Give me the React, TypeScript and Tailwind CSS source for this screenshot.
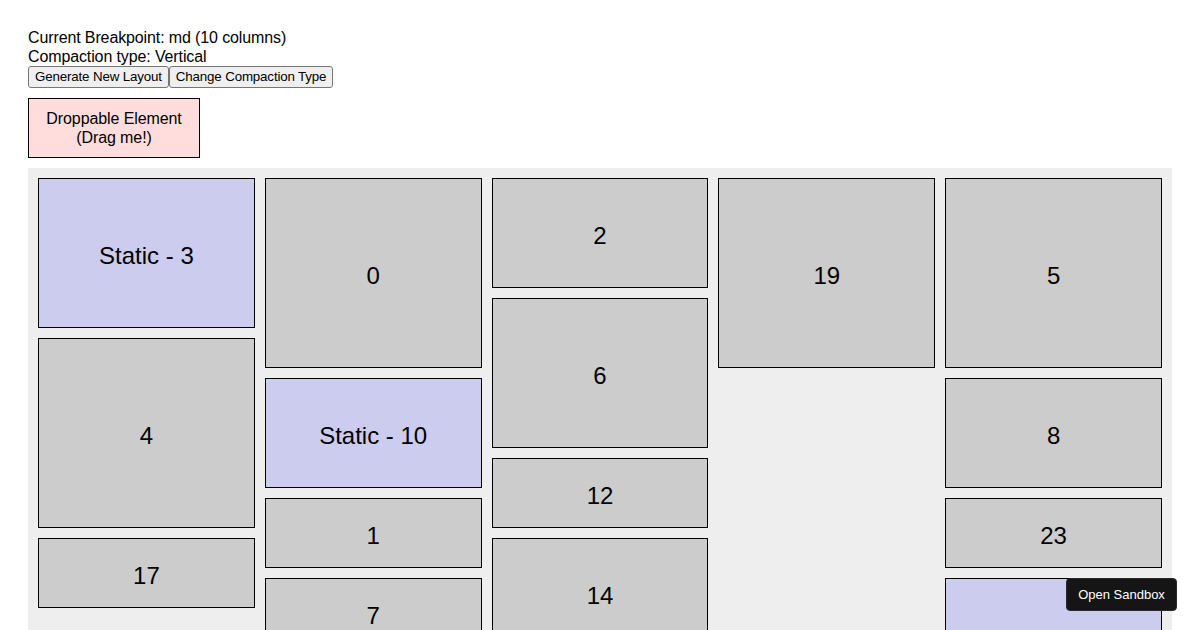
const items = [
  { id: 'Static - 3', cls: 'col-start-1 col-span-2 row-start-1 row-span-4', s: true },
  { id: '4', cls: 'col-start-1 col-span-2 row-start-5 row-span-5' },
  { id: '17', cls: 'col-start-1 col-span-2 row-start-10 row-span-2' },
  { id: '0', cls: 'col-start-3 col-span-2 row-start-1 row-span-5' },
  { id: 'Static - 10', cls: 'col-start-3 col-span-2 row-start-6 row-span-3', s: true },
  { id: '1', cls: 'col-start-3 col-span-2 row-start-9 row-span-2' },
  { id: '7', cls: 'col-start-3 col-span-2 row-start-11 row-span-2' },
  { id: '2', cls: 'col-start-5 col-span-2 row-start-1 row-span-3' },
  { id: '6', cls: 'col-start-5 col-span-2 row-start-4 row-span-4' },
  { id: '12', cls: 'col-start-5 col-span-2 row-start-8 row-span-2' },
  { id: '14', cls: 'col-start-5 col-span-2 row-start-10 row-span-3' },
  { id: '19', cls: 'col-start-7 col-span-2 row-start-1 row-span-5' },
  { id: '5', cls: 'col-start-9 col-span-2 row-start-1 row-span-5' },
  { id: '8', cls: 'col-start-9 col-span-2 row-start-6 row-span-3' },
  { id: '23', cls: 'col-start-9 col-span-2 row-start-9 row-span-2' },
  { id: 'Static - 9', cls: 'col-start-9 col-span-2 row-start-11 row-span-4', s: true, hide: true },
]

export default function App() {
  return (
    <div className="min-h-screen bg-white px-[28px] pt-[28px] text-[16px] leading-[19px] text-black" style={{ fontFamily: '"Liberation Sans", Arial, sans-serif' }}>
      <div className="tracking-[-0.12px]">Current Breakpoint: md (10 columns)</div>
      <div className="tracking-[-0.12px]">Compaction type: Vertical</div>
      <div className="flex">
        <button className="h-[22px] rounded-[3px] border border-[#767676] bg-[#efefef] px-[6px] text-[13.33px] leading-[16px] tracking-[-0.15px]">
          Generate New Layout
        </button>
        <button className="h-[22px] rounded-[3px] border border-[#767676] bg-[#efefef] px-[6px] text-[13.33px] leading-[16px] tracking-[-0.15px]">
          Change Compaction Type
        </button>
      </div>
      <div className="mt-[10px] mb-[10px] w-[172px] border border-black bg-[#fdd] p-[10px] text-center leading-[19px] tracking-[-0.1px]">
        Droppable Element (Drag me!)
      </div>
      <div className="grid grid-cols-10 auto-rows-[30px] gap-[10px] bg-[#eee] p-[10px] pb-[40px]">
        {items.map((it) => (
          <div
            key={it.id}
            className={`${it.cls} flex items-center justify-center border border-black pt-[4px] text-[24px] ${it.s ? 'bg-[#cce]' : 'bg-[#ccc]'}`}
          >
            {it.hide ? '' : it.id}
          </div>
        ))}
      </div>
      <div className="fixed bottom-[19px] right-[23px] flex h-[33px] w-[111px] items-center justify-center rounded-[4px] border border-[#2a2a2a] bg-[#151515] text-[13px] text-white">
        Open Sandbox
      </div>
    </div>
  )
}
